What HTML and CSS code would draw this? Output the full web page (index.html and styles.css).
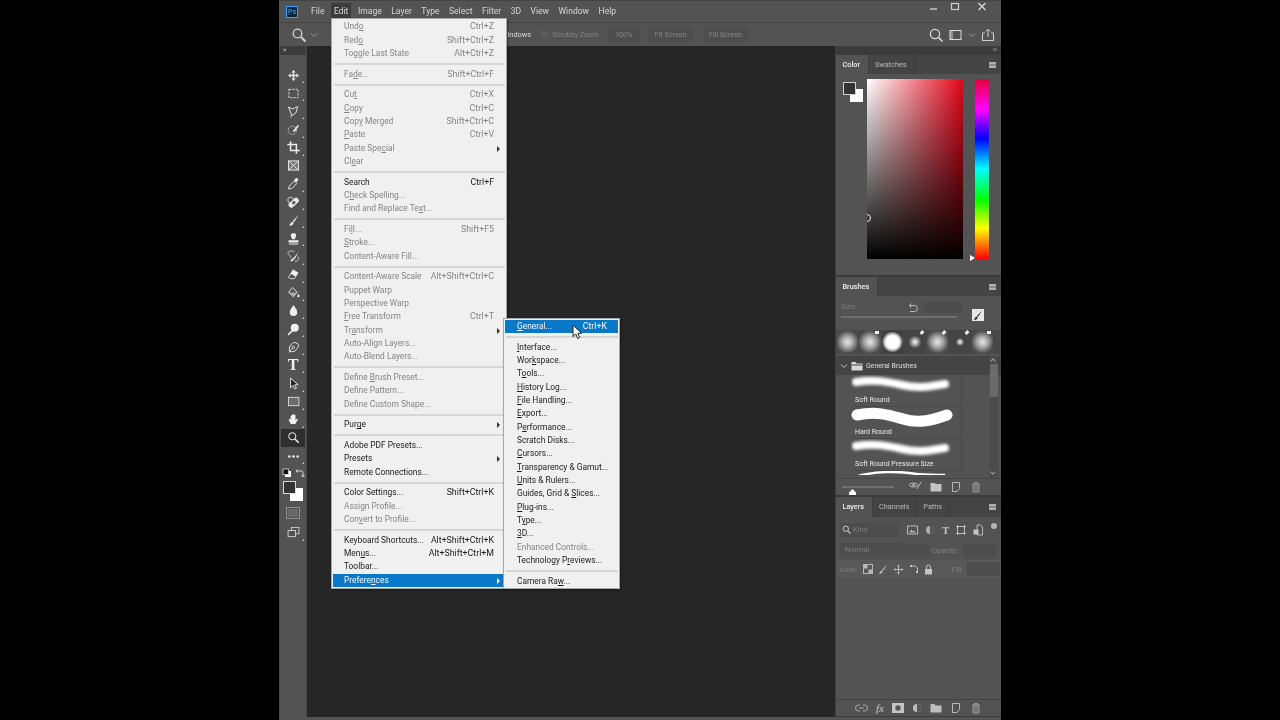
FILE: index.html
```html
<!DOCTYPE html>
<html lang="en">
<head>
    <meta charset="UTF-8">
    <meta name="viewport" content="width=device-width, initial-scale=1.0">
    <title>Photoshop Preferences Menu</title>
    <link rel="stylesheet" href="styles.css">
</head>
<body>
    <div class="app">
        <div class="menubar">
            <div class="ps-logo">Ps</div>
            <nav class="menu-names">
                <span>File</span>
                <span class="open">Edit</span>
                <span>Image</span>
                <span>Layer</span>
                <span>Type</span>
                <span>Select</span>
                <span>Filter</span>
                <span>3D</span>
                <span>View</span>
                <span>Window</span>
                <span>Help</span>
            </nav>
            <div class="win-controls">
                <svg width="10" height="10" viewBox="0 0 10 10"><path d="M1 7h7" stroke="#bdbdbd" stroke-width="1.6"/></svg>
                <svg width="10" height="10" viewBox="0 0 10 10"><rect x="1.5" y="1.5" width="7" height="6" fill="none" stroke="#cfcfcf" stroke-width="1.2"/></svg>
                <svg width="10" height="10" viewBox="0 0 10 10"><path d="M1.5 1l7 7M8.5 1l-7 7" stroke="#d8d8d8" stroke-width="1.3"/></svg>
            </div>
        </div>

        <div class="optionsbar">
            <svg class="opt-zoom" width="16" height="16" viewBox="0 0 16 16"><circle cx="6.5" cy="6.5" r="4.3" fill="none" stroke="#d4d4d4" stroke-width="1.3"/><path d="M10 10l4.5 4.5" stroke="#d4d4d4" stroke-width="2"/></svg>
            <svg class="opt-chev" width="8" height="8" viewBox="0 0 8 8"><path d="M1 2.5l3 3 3-3" fill="none" stroke="#9a9a9a"/></svg>
            <span class="opt-windows">Windows</span>
            <span class="opt-check"></span>
            <span class="opt-dim">Scrubby Zoom</span>
            <span class="opt-btn pct">100%</span>
            <span class="opt-btn fit">Fit Screen</span>
            <span class="opt-btn fill">Fill Screen</span>
            <div class="opt-right">
                <svg width="16" height="16" viewBox="0 0 16 16"><circle cx="7" cy="7" r="4.6" fill="none" stroke="#dcdcdc" stroke-width="1.2"/><path d="M10.5 10.5l4 4" stroke="#dcdcdc" stroke-width="1.6"/></svg>
                <svg width="14" height="12" viewBox="0 0 14 12"><rect x="1" y="1.5" width="11" height="9" fill="none" stroke="#dcdcdc"/><rect x="1" y="1.5" width="3" height="9" fill="#dcdcdc" opacity=".45"/></svg>
                <svg width="8" height="8" viewBox="0 0 8 8"><path d="M1 2.5l3 3 3-3" fill="none" stroke="#9a9a9a"/></svg>
                <svg width="14" height="14" viewBox="0 0 14 14"><path d="M4 5H1.5v7.500h11V5H10M7 9V1.500M4.800 3.500L7 1.200l2.200 2.300" fill="none" stroke="#cfcfcf"/></svg>
            </div>
        </div>

        <div class="workspace">
            <aside class="tools">
                <div class="collapse-strip">&raquo;</div>
                <div class="tool-list">
                    <div class="tool more"><svg viewBox="0 0 18 18"><path d="M9 2.500l2.600 3H6.400zM9 15.500l2.600-3H6.400zM2.500 9l3-2.600v5.200zM15.500 9l-3-2.600v5.200z" fill="#e6e6e6"/><path d="M9 5v8M5 9h8" stroke="#e6e6e6" stroke-width="1.800"/></svg></div>
                    <div class="tool more"><svg viewBox="0 0 18 18"><rect x="3.500" y="4" width="11" height="10" fill="none" stroke="#e0e0e0" stroke-width="1.200" stroke-dasharray="2.500 1.500"/></svg></div>
                    <div class="tool more"><svg viewBox="0 0 18 18"><path d="M3 3.500l5 2.500 6-3-2 7.500-5 3.500L3 3.500z" fill="none" stroke="#e0e0e0" stroke-width="1.200"/><path d="M7 13.500c-1.500 1-2 2-.5 2.500" fill="none" stroke="#e0e0e0"/></svg></div>
                    <div class="tool more"><svg viewBox="0 0 18 18"><circle cx="7.500" cy="10" r="5" fill="none" stroke="#d8d8d8" stroke-dasharray="2 1.200"/><path d="M8 11l6-7.500 1.500 1.200-5.500 7.300z" fill="#f0f0f0"/></svg></div>
                    <div class="tool more"><svg viewBox="0 0 18 18"><path d="M5.500 1.500v11h11M1.500 5.500h11v11" fill="none" stroke="#ececec" stroke-width="1.800"/></svg></div>
                    <div class="tool"><svg viewBox="0 0 18 18"><rect x="3" y="3.500" width="12" height="11" fill="#777" stroke="#e4e4e4" stroke-width="1.200"/><path d="M3 3.500l12 11M15 3.500l-12 11" stroke="#e4e4e4" stroke-width="1.200"/></svg></div>
                    <div class="tool more"><svg viewBox="0 0 18 18"><path d="M3 15.500l1-3.500 6-6 3 3-6 6z" fill="none" stroke="#e6e6e6" stroke-width="1.200"/><path d="M9.500 5l2.500-2.500c1-1 3.500 1.500 2.500 2.500L12.500 7.500z" fill="#efefef"/></svg></div>
                    <div class="tool more"><svg viewBox="0 0 18 18"><rect x="2" y="6" width="14" height="6.500" rx="2.500" transform="rotate(-42 9 9)" fill="#ececec"/><rect x="7" y="7" width="4" height="4" transform="rotate(-42 9 9)" fill="#555"/><circle cx="5.500" cy="6" r="3.400" fill="none" stroke="#e0e0e0"/></svg></div>
                    <div class="tool more"><svg viewBox="0 0 18 18"><path d="M15 2.500L8 10l1.500 1.500zM7.500 10.500c-2 .5-1.500 2.500-4 4.500 3 .5 5.500-1 5.500-3z" fill="#efefef"/></svg></div>
                    <div class="tool more"><svg viewBox="0 0 18 18"><path d="M7.200 9.500c0-2-1.500-3-1.500-5C5.700 1.500 12.300 1.500 12.300 4.500c0 2-1.500 3-1.500 5zM3 10.500h12v2.800H3zM3.500 14.500h11v1.200h-11z" fill="#f0f0f0" transform="translate(0 .5)"/></svg></div>
                    <div class="tool more"><svg viewBox="0 0 18 18"><path d="M15 4l-6.500 7 1.500 1.500zM8 11.500c-1.500.5-1.500 2-3 3 2 .5 4-.5 4.500-2z" fill="#efefef"/><path d="M10 3c-4-1.500-8-.5-7.500 2.500.4 2.500 3.500 2 3.500 5M14.500 9c1.500 3-.5 6-3.500 6" fill="none" stroke="#dcdcdc"/></svg></div>
                    <div class="tool more"><svg viewBox="0 0 18 18"><path d="M8.500 3.500l6 3.500-4.500 7H5.500L3 12.500z" fill="none" stroke="#e4e4e4" stroke-width="1.100"/><path d="M8.500 3.500l6 3.500-3 4.500-6-3.500z" fill="#efefef"/></svg></div>
                    <div class="tool more"><svg viewBox="0 0 18 18"><path d="M8 3l5.500 6-5 5-5.500-5.500z" fill="none" stroke="#e4e4e4" stroke-width="1.200"/><path d="M3 9h10l-4.500 5z" fill="#aaa"/><path d="M15 10.500c.8 1.500 1.300 2.200 1.300 3a1.300 1.300 0 0 1-2.600 0c0-.8.500-1.500 1.300-3z" fill="#efefef"/></svg></div>
                    <div class="tool more"><svg viewBox="0 0 18 18"><path d="M9 2.500c2 3.500 4.500 5.500 4.500 8.500a4.500 4.500 0 0 1-9 0c0-3 2.500-5 4.500-8.500z" fill="#ececec"/></svg></div>
                    <div class="tool more"><svg viewBox="0 0 18 18"><circle cx="10.500" cy="7" r="4.800" fill="#f0f0f0"/><path d="M7.500 10.500L2.500 15.500" stroke="#f0f0f0" stroke-width="2"/></svg></div>
                    <div class="tool more"><svg viewBox="0 0 18 18"><path d="M9.500 3c3 0 5.500 2 5.500 2.500 0 3-2 6-4 7.500-1.500 1-5.500 1.500-6.500.5s-.5-5 .5-6.500C6 5 9.500 3 9.500 3z" fill="none" stroke="#e4e4e4" stroke-width="1.200"/><circle cx="8.700" cy="9" r="1.500" fill="none" stroke="#e4e4e4"/><path d="M3 15l4.500-5" stroke="#e4e4e4"/></svg></div>
                    <div class="tool more type-tool">T</div>
                    <div class="tool more"><svg viewBox="0 0 18 18"><path d="M5.500 2.500v11.500l3-2.700 2 4.200 2-.9-2-4.100h4z" fill="#222" stroke="#efefef" stroke-width="1.100"/></svg></div>
                    <div class="tool more"><svg viewBox="0 0 18 18"><rect x="3" y="4" width="12.500" height="10" fill="#6c6c6c" stroke="#dcdcdc" stroke-width="1.100"/></svg></div>
                    <div class="tool more"><svg viewBox="0 0 18 18"><path d="M5.500 9V5c0-1 1.400-1 1.400 0V3.700c0-1 1.500-1 1.500 0v-.5c0-1 1.500-1 1.500 0v.8c0-1 1.500-1 1.500 0v6l1.300-1.600c.8-.9 2 .1 1.400 1l-3 5.100H7c-1.500 0-2-1-2.500-2.500L3.300 9.300c-.3-1 1-1.500 1.500-.5z" fill="#f2f2f2"/></svg></div>
                    <div class="tool active"><svg viewBox="0 0 18 18"><circle cx="7.500" cy="7.500" r="4.300" fill="none" stroke="#f0f0f0" stroke-width="1.200"/><path d="M10.800 10.800l4.500 4.500" stroke="#f0f0f0" stroke-width="1.800"/></svg></div>
                    <div class="tool more"><svg viewBox="0 0 18 18"><circle cx="4" cy="9" r="1.600" fill="#e8e8e8"/><circle cx="9" cy="9" r="1.600" fill="#e8e8e8"/><circle cx="14" cy="9" r="1.600" fill="#e8e8e8"/></svg></div>
                </div>
                <div class="swap-row">
                    <svg width="10" height="10" viewBox="0 0 10 10"><rect x="3" y="3" width="6" height="6" fill="#fff"/><rect x="1" y="1" width="5.500" height="5.500" fill="#111" stroke="#ddd" stroke-width=".8"/></svg>
                    <svg width="10" height="10" viewBox="0 0 10 10"><path d="M2.500 1.500l-1.500 1.500 1.500 1.500M1 3h5.500c1 0 1.500.5 1.500 1.500V8M6.500 7.200L8 9l1.500-1.800" fill="none" stroke="#dcdcdc"/></svg>
                </div>
                <div class="tool-colors">
                    <span class="bg-chip"></span>
                    <span class="fg-chip"></span>
                </div>
                <div class="tool-mask"><svg width="14" height="12" viewBox="0 0 14 12"><rect x=".5" y=".5" width="13" height="11" fill="none" stroke="#8f8f8f"/><rect x="3" y="3" width="8" height="6" fill="#666" stroke="#777"/></svg></div>
                <div class="tool more"><svg viewBox="0 0 18 18"><rect x="6.500" y="3" width="9" height="7.500" fill="#535353" stroke="#dcdcdc"/><rect x="2.500" y="6.500" width="9" height="7.500" fill="#535353" stroke="#dcdcdc"/></svg></div>
            </aside>

            <main class="canvas"></main>

            <aside class="panels">
                <div class="collapse-strip right">&#8249;&#8250;</div>

                <section class="panel color-panel">
                    <div class="tabs">
                        <span class="tab active">Color</span>
                        <span class="tab">Swatches</span>
                        <span class="panel-menu"></span>
                    </div>
                    <div class="color-body">
                        <div class="chips">
                            <span class="chip-bg"></span>
                            <span class="chip-fg"></span>
                        </div>
                        <div class="sat-field">
                            <span class="sat-handle"></span>
                        </div>
                        <div class="hue-bar">
                            <span class="hue-handle"></span>
                        </div>
                    </div>
                </section>

                <section class="panel brush-panel">
                    <div class="tabs">
                        <span class="tab active">Brushes</span>
                        <span class="panel-menu"></span>
                    </div>
                    <div class="brush-size">
                        <div class="size-row">
                            <span class="size-label">Size:</span>
                            <svg width="12" height="12" viewBox="0 0 12 12"><path d="M2.500 3.500h5a3 3 0 0 1 0 6H3M4.500 1.500l-2 2 2 2" fill="none" stroke="#bcbcbc"/></svg>
                            <span class="size-input"></span>
                            <span class="brush-toggle"><svg width="12" height="12" viewBox="0 0 12 12"><path d="M10 1.500L5 7l1 1zM4.500 7.500c-1.500.5-1 2-3 3 2.500 1 4.500-.5 4-2z" fill="#222"/></svg></span>
                        </div>
                        <div class="size-slider"></div>
                    </div>
                    <div class="presets">
                        <span class="preset soft"></span>
                        <span class="preset soft flag"></span>
                        <span class="preset hard"></span>
                        <span class="preset tiny pin dark"></span>
                        <span class="preset soft pin"></span>
                        <span class="preset tinier pin dark"></span>
                        <span class="preset soft flag"></span>
                    </div>
                    <div class="brush-list">
                        <div class="brush-group">
                            <svg width="8" height="8" viewBox="0 0 8 8"><path d="M1 2.500l3 3 3-3" fill="none" stroke="#c4c4c4"/></svg>
                            <svg width="12" height="10" viewBox="0 0 12 10"><path d="M.5 1h4l1 1.500h6V9.500H.5z" fill="#d8d8d8"/><path d="M.5 4h11" stroke="#444"/></svg>
                            <span>General Brushes</span>
                        </div>
                        <div class="brush-rows">
                            <div class="brush-item">
                                <svg class="stroke-svg" width="110" height="20" viewBox="0 0 110 20"><path class="stroke soft-stroke" d="M5 7c20-3 32 0 46 3 17 4 30 1 43-1"/></svg>
                                <span>Soft Round</span>
                            </div>
                            <div class="brush-item">
                                <svg class="stroke-svg" width="110" height="20" viewBox="0 0 110 20"><path class="stroke hard-stroke" d="M6 8c20-4 32 0 46 4 16 5 30 1 44-4"/></svg>
                                <span>Hard Round</span>
                            </div>
                            <div class="brush-item">
                                <svg class="stroke-svg" width="110" height="20" viewBox="0 0 110 20"><path class="stroke soft-stroke" d="M5 7c20-3 32 0 46 3 17 4 30 1 43-1"/></svg>
                                <span>Soft Round Pressure Size</span>
                            </div>
                            <div class="brush-item cut">
                                <svg class="stroke-svg" width="110" height="6" viewBox="0 0 110 6"><path d="M4 6C22 0 48 0 66 3c12 1 22 1 28 1" fill="none" stroke="#fff" stroke-width="2.500"/></svg>
                            </div>
                        </div>
                        <div class="scroll-track">
                            <span class="scroll-up"></span>
                            <span class="scroll-thumb"></span>
                            <span class="scroll-down"></span>
                        </div>
                    </div>
                    <div class="panel-footer brush-footer">
                        <div class="foot-slider"><span></span></div>
                        <svg width="14" height="12" viewBox="0 0 14 12"><ellipse cx="5.500" cy="4" rx="4" ry="2" fill="none" stroke="#b8b8b8"/><circle cx="5.500" cy="4" r="1.300" fill="#b8b8b8"/><path d="M13 1L9 8" stroke="#b8b8b8"/></svg>
                        <svg width="12" height="12" viewBox="0 0 12 12"><path d="M.5 2h4l1 1h6v7.500H.5z" fill="#c4c4c4"/></svg>
                        <svg width="12" height="12" viewBox="0 0 12 12"><path d="M2.500 1.500h7v6l-2.500 3H2.500z" fill="none" stroke="#b8b8b8"/></svg>
                        <svg width="12" height="12" viewBox="0 0 12 12"><path d="M2 3h8M4.500 3V1.500h3V3M3 3v8h6V3" fill="#777" stroke="#8f8f8f"/></svg>
                    </div>
                </section>

                <section class="panel layers-panel">
                    <div class="tabs">
                        <span class="tab active">Layers</span>
                        <span class="tab">Channels</span>
                        <span class="tab">Paths</span>
                        <span class="panel-menu"></span>
                    </div>
                    <div class="layer-row filter-row">
                        <div class="field kind">
                            <svg width="9" height="9" viewBox="0 0 9 9"><circle cx="3.800" cy="3.800" r="2.700" fill="none" stroke="#c8c8c8"/><path d="M5.800 5.800L8.500 8.500" stroke="#c8c8c8" stroke-width="1.200"/></svg>
                            <span>Kind</span>
                        </div>
                        <div class="filter-icons">
                            <svg width="11" height="10" viewBox="0 0 11 10"><rect x=".5" y="1" width="10" height="8" fill="none" stroke="#b8b8b8"/><path d="M2 7.500l2.500-3 1.500 2 1-1 2 2z" fill="#b8b8b8"/></svg>
                            <svg width="10" height="10" viewBox="0 0 10 10"><circle cx="5" cy="5" r="4" fill="#aaa"/><path d="M5 1a4 4 0 0 1 0 8z" fill="#555"/></svg>
                            <span class="filter-t">T</span>
                            <svg width="10" height="10" viewBox="0 0 10 10"><rect x="1.500" y="1.500" width="7" height="7" fill="none" stroke="#b8b8b8"/><path d="M1 1h1v1H1zM8 1h1v1H8zM1 8h1v1H1zM8 8h1v1H8z" fill="#ddd" stroke="#ddd"/></svg>
                            <svg width="10" height="12" viewBox="0 0 10 12"><path d="M4 1h3.500l2 2v8H4z" fill="none" stroke="#b8b8b8"/><rect x=".5" y="5.500" width="5" height="5" fill="#c4c4c4"/></svg>
                            <span class="filter-dot"></span>
                        </div>
                    </div>
                    <div class="layer-row blend-row">
                        <div class="field normal">Normal</div>
                        <span class="dim-label">Opacity:</span>
                        <div class="field stepper"></div>
                    </div>
                    <div class="layer-row lock-row">
                        <span class="dim-label">Lock:</span>
                        <div class="lock-icons">
                            <svg width="10" height="10" viewBox="0 0 10 10"><path d="M1 1h3.500v3.500H1zM5.500 5.500H9V9H5.500z" fill="#b8b8b8"/><rect x=".5" y=".5" width="9" height="9" fill="none" stroke="#b8b8b8"/></svg>
                            <svg width="10" height="10" viewBox="0 0 10 10"><path d="M9 .5L4 6l1 1zM3.500 6.500c-1 .5-1 2-3 3 2.500.5 4-.5 4-2z" fill="#c4c4c4"/></svg>
                            <svg width="11" height="11" viewBox="0 0 11 11"><path d="M5.500 1v9M1 5.500h9" stroke="#b8b8b8"/><path d="M5.500.5l1.500 2H4zM5.500 10.500l1.500-2H4zM.5 5.500l2-1.500v3zM10.500 5.500l-2-1.500v3z" fill="#b8b8b8"/></svg>
                            <svg width="10" height="10" viewBox="0 0 10 10"><path d="M1.500 2h5l2 2v5" fill="none" stroke="#b8b8b8"/><path d="M1 1h2v2H1zM7 7h2v2H7z" fill="#c4c4c4"/></svg>
                            <svg width="9" height="11" viewBox="0 0 9 11"><path d="M2.500 5V3a2 2 0 0 1 4 0v2" fill="none" stroke="#c4c4c4"/><rect x="1" y="5" width="7" height="5.500" fill="#c4c4c4"/></svg>
                        </div>
                        <span class="dim-label fill-label">Fill:</span>
                        <div class="field stepper"></div>
                    </div>
                    <div class="layer-empty"></div>
                    <div class="panel-footer layer-footer">
                        <svg width="13" height="8" viewBox="0 0 13 8"><path d="M5 1H3.500a3 3 0 0 0 0 6H5M8 1h1.500a3 3 0 0 1 0 6H8M4 4h5" fill="none" stroke="#a8a8a8"/></svg>
                        <span class="fx">fx</span>
                        <svg width="12" height="10" viewBox="0 0 12 10"><rect width="12" height="10" fill="#c4c4c4"/><circle cx="6" cy="5" r="2.700" fill="#555"/></svg>
                        <svg width="10" height="10" viewBox="0 0 10 10"><circle cx="5" cy="5" r="4" fill="#bbb"/><path d="M5 1a4 4 0 0 1 0 8z" fill="#555"/></svg>
                        <svg width="12" height="10" viewBox="0 0 12 10"><path d="M.5 1h4l1 1.500h6V9.500H.5z" fill="#bdbdbd"/></svg>
                        <svg width="12" height="12" viewBox="0 0 12 12"><path d="M2.500 1.500h7v6l-2.500 3H2.500z" fill="none" stroke="#b8b8b8"/></svg>
                        <svg width="12" height="12" viewBox="0 0 12 12"><path d="M2 3h8M4.500 3V1.500h3V3M3 3v8h6V3" fill="#777" stroke="#9a9a9a"/></svg>
                    </div>
                </section>
            </aside>
        </div>

        <!-- Edit dropdown -->
        <div class="menu edit-menu">
            <div class="item off"><span>Und<u>o</u></span><kbd>Ctrl+Z</kbd></div>
            <div class="item off"><span>Red<u>o</u></span><kbd>Shift+Ctrl+Z</kbd></div>
            <div class="item off"><span>Toggle Last State</span><kbd>Alt+Ctrl+Z</kbd></div>
            <hr>
            <div class="item off"><span>Fa<u>d</u>e...</span><kbd>Shift+Ctrl+F</kbd></div>
            <hr>
            <div class="item off"><span>Cu<u>t</u></span><kbd>Ctrl+X</kbd></div>
            <div class="item off"><span><u>C</u>opy</span><kbd>Ctrl+C</kbd></div>
            <div class="item off"><span>Cop<u>y</u> Merged</span><kbd>Shift+Ctrl+C</kbd></div>
            <div class="item off"><span><u>P</u>aste</span><kbd>Ctrl+V</kbd></div>
            <div class="item off sub"><span>Paste Spe<u>c</u>ial</span></div>
            <div class="item off"><span>Cl<u>e</u>ar</span></div>
            <hr>
            <div class="item"><span>Search</span><kbd>Ctrl+F</kbd></div>
            <div class="item off"><span>C<u>h</u>eck Spelling...</span></div>
            <div class="item off"><span>Find and Replace Te<u>x</u>t...</span></div>
            <hr>
            <div class="item off"><span>Fi<u>l</u>l...</span><kbd>Shift+F5</kbd></div>
            <div class="item off"><span><u>S</u>troke...</span></div>
            <div class="item off"><span>Content-Aware Fill...</span></div>
            <hr>
            <div class="item off"><span>Content-Aware Scale</span><kbd>Alt+Shift+Ctrl+C</kbd></div>
            <div class="item off"><span>Puppet Warp</span></div>
            <div class="item off"><span>Perspective Warp</span></div>
            <div class="item off"><span><u>F</u>ree Transform</span><kbd>Ctrl+T</kbd></div>
            <div class="item off sub"><span>Tr<u>a</u>nsform</span></div>
            <div class="item off"><span>Auto-Align Layers...</span></div>
            <div class="item off"><span>Auto-Blend Layers...</span></div>
            <hr>
            <div class="item off"><span>Define <u>B</u>rush Preset...</span></div>
            <div class="item off"><span>Define Pattern...</span></div>
            <div class="item off"><span>Define Custom Shape...</span></div>
            <hr>
            <div class="item sub"><span>Pur<u>g</u>e</span></div>
            <hr>
            <div class="item"><span>Adobe PDF Presets...</span></div>
            <div class="item sub"><span>Presets</span></div>
            <div class="item"><span>Remote Connections...</span></div>
            <hr>
            <div class="item"><span>Color Settings...</span><kbd>Shift+Ctrl+K</kbd></div>
            <div class="item off"><span>Assign Profile...</span></div>
            <div class="item off"><span>Con<u>v</u>ert to Profile...</span></div>
            <hr>
            <div class="item"><span>Keyboard Shortcuts...</span><kbd>Alt+Shift+Ctrl+K</kbd></div>
            <div class="item"><span>Men<u>u</u>s...</span><kbd>Alt+Shift+Ctrl+M</kbd></div>
            <div class="item"><span>Toolbar...</span></div>
            <div class="item sub selected"><span>Prefere<u>n</u>ces</span></div>
        </div>

        <!-- Preferences flyout -->
        <div class="menu prefs-menu">
            <div class="item selected"><span><u>G</u>eneral...</span><kbd>Ctrl+K</kbd></div>
            <hr>
            <div class="item"><span><u>I</u>nterface...</span></div>
            <div class="item"><span>Wor<u>k</u>space...</span></div>
            <div class="item"><span>T<u>o</u>ols...</span></div>
            <div class="item"><span><u>H</u>istory Log...</span></div>
            <div class="item"><span><u>F</u>ile Handling...</span></div>
            <div class="item"><span><u>E</u>xport...</span></div>
            <div class="item"><span>P<u>e</u>rformance...</span></div>
            <div class="item"><span>Scratch Disks...</span></div>
            <div class="item"><span><u>C</u>ursors...</span></div>
            <div class="item"><span><u>T</u>ransparency &amp; Gamut...</span></div>
            <div class="item"><span><u>U</u>nits &amp; Rulers...</span></div>
            <div class="item"><span>Guides, Grid &amp; <u>S</u>lices...</span></div>
            <div class="item"><span><u>P</u>lug-ins...</span></div>
            <div class="item"><span>T<u>y</u>pe...</span></div>
            <div class="item"><span><u>3</u>D...</span></div>
            <div class="item off"><span>Enhanced Controls...</span></div>
            <div class="item"><span>Technology P<u>r</u>eviews...</span></div>
            <hr>
            <div class="item"><span>Camera Ra<u>w</u>...</span></div>
        </div>

        <svg class="mouse" width="11" height="16" viewBox="0 0 11 16"><path d="M1 1v11.500l2.800-2.500 1.900 4.500 2-.9-1.900-4.300h3.700z" fill="#fff" stroke="#111" stroke-width=".9"/></svg>
    </div>
</body>
</html>
```

FILE: styles.css
```css
* {
    box-sizing: border-box;
}

body {
    margin: 0;
    height: 720px;
    overflow: hidden;
    display: flex;
    justify-content: center;
    background-color: #000;
    font-family: Roboto, "Open Sans", sans-serif;
    font-size: 8px;
}

.app {
    position: relative;
    width: 722px;
    height: 720px;
    display: flex;
    flex-direction: column;
    background-color: #535353;
    color: #d6d6d6;
    overflow: hidden;
    filter: blur(0.3px);
}

/* top bars */
.menubar {
    height: 22px;
    display: flex;
    align-items: center;
    padding-left: 7px;
    border-top: 1px solid #444;
    background-color: #535353;
}

.ps-logo {
    width: 12px;
    height: 12px;
    border: 1px solid #31a8ff;
    background-color: #06263f;
    color: #4db3ff;
    font-size: 7px;
    line-height: 10px;
    text-align: center;
}

.menu-names {
    display: flex;
    margin-left: 10px;
    font-size: 8.55px;
}

.menu-names span {
    padding: 0 3px;
    height: 17px;
    line-height: 17px;
    margin-right: 3.5px;
}

.menu-names .open {
    background-color: #3c3c3c;
}

.win-controls {
    margin-left: auto;
    margin-right: 14px;
    margin-top: -9px;
    display: flex;
    gap: 11px;
}

.win-controls svg:last-child {
    margin-left: 6px;
}

.optionsbar {
    height: 24px;
    display: flex;
    align-items: center;
    border-top: 1px solid #424242;
    padding-left: 12px;
    font-size: 7.2px;
    white-space: nowrap;
    color: #dadada;
}

.opt-chev {
    margin-left: 3px;
}

.opt-windows {
    margin-left: 183px;
    font-size: 7.4px;
}

.opt-check {
    width: 7px;
    height: 7px;
    margin-left: 10px;
    background-color: #5c5c5c;
}

.opt-dim {
    margin-left: 4px;
    color: #858585;
}

.opt-btn {
    height: 15px;
    line-height: 15px;
    text-align: center;
    color: #858585;
    background-color: #4e4e4e;
}

.pct {
    width: 34px;
    margin-left: 8px;
}

.fit {
    width: 46px;
    margin-left: 7px;
}

.fill {
    width: 46px;
    margin-left: 9px;
}

.opt-right {
    margin-left: auto;
    margin-right: 6px;
    display: flex;
    align-items: center;
    gap: 5px;
}

.workspace {
    flex: 1;
    display: flex;
    min-height: 0;
    margin-bottom: 3px;
}

/* tools column */
.tools {
    width: 28px;
    padding: 0 1px;
    background-color: #484848;
    display: flex;
    flex-direction: column;
    align-items: stretch;
}

.collapse-strip {
    height: 9px;
    line-height: 8px;
    padding-left: 3px;
    font-size: 7px;
    color: #c8c8c8;
    background-color: #3c3c3c;
}

.collapse-strip.right {
    padding: 0 4px 0 0;
    text-align: right;
}

.tool-list {
    padding-top: 11px;
    background-color: #535353;
}

.tool {
    position: relative;
    height: 18.15px;
    display: flex;
    align-items: center;
    justify-content: center;
    background-color: #535353;
}

.tool svg {
    width: 15px;
    height: 15px;
}

.tool.more::after {
    content: "";
    position: absolute;
    right: 2px;
    bottom: 1px;
    border-left: 2px solid transparent;
    border-bottom: 2px solid #c8c8c8;
}

.tool.active {
    margin: 0 1px;
    background-color: #2f2f2f;
}

.type-tool {
    font-family: "Liberation Serif", serif;
    font-size: 16px;
    font-weight: bold;
    color: #f0f0f0;
}

.swap-row {
    height: 14.5px;
    padding-top: 2.5px;
    display: flex;
    justify-content: center;
    gap: 3px;
    background-color: #535353;
}

.tool-colors {
    position: relative;
    height: 22px;
    background-color: #535353;
}

.fg-chip,
.bg-chip {
    position: absolute;
    width: 13px;
    height: 13px;
}

.fg-chip {
    left: 3px;
    top: 1px;
    background-color: #333;
    border: 1px solid #d8d8d8;
}

.bg-chip {
    left: 10px;
    top: 8px;
    background-color: #fff;
}

.tool-mask {
    height: 22px;
    display: flex;
    align-items: center;
    justify-content: center;
    background-color: #535353;
}

.tools > .tool {
    flex: none;
}

.tools::after {
    content: "";
    flex: 1;
    background-color: #535353;
}

.canvas {
    flex: 1;
    background-color: #262626;
}

/* right panels */
.panels {
    width: 166px;
    display: flex;
    flex-direction: column;
    gap: 2px;
    border-left: 1px solid #3e3e3e;
    background-color: #3a3a3a;
}

.panels .collapse-strip {
    margin-bottom: -2px;
}

.panel {
    display: flex;
    flex-direction: column;
    background-color: #535353;
}

.tabs {
    height: 19px;
    flex: none;
    display: flex;
    background-color: #444;
    font-size: 7.3px;
    color: #b8b8b8;
}

.tab {
    padding: 0 7px 0 6px;
    line-height: 19px;
    border-right: 1px solid #3d3d3d;
}

.tab.active {
    padding: 0 8px 0 6.5px;
    background-color: #535353;
    color: #f0f0f0;
    font-weight: 500;
}

.panel-menu {
    width: 7px;
    height: 6px;
    margin: 7px 5px 0 auto;
    border-top: 2px solid #b0b0b0;
    border-bottom: 2px solid #b0b0b0;
    background-color: #8a8a8a;
}

.color-panel {
    height: 220px;
}

.color-body {
    position: relative;
    flex: 1;
    display: flex;
    padding: 5px 0 0 31px;
}

.chips {
    position: absolute;
    left: 7px;
    top: 8px;
}

.chip-fg,
.chip-bg {
    position: absolute;
    width: 13px;
    height: 13px;
}

.chip-fg {
    background-color: #333;
    border: 1px solid #d0d0d0;
}

.chip-bg {
    left: 7px;
    top: 7px;
    background-color: #fff;
}

.sat-field {
    position: relative;
    overflow: hidden;
    width: 96px;
    height: 180px;
    background:
        linear-gradient(to top, #000, rgba(0, 0, 0, 0)),
        linear-gradient(to right, #fff, #e4061a);
}

.sat-handle {
    position: absolute;
    left: -4px;
    top: 135px;
    width: 8px;
    height: 8px;
    border: 1px solid #eee;
    border-radius: 50%;
}

.hue-bar {
    position: relative;
    width: 14px;
    height: 180px;
    margin-left: 12px;
    background: linear-gradient(to bottom, #e6003a, #f0f 17%, #00f 33%, #0ff 50%, #0f0 67%, #ff0 83%, #f00);
}

.hue-handle {
    position: absolute;
    left: -5px;
    bottom: -2px;
    border-left: 5px solid #fff;
    border-top: 3px solid transparent;
    border-bottom: 3px solid transparent;
}

.brush-panel {
    height: 218px;
}

.brush-size {
    height: 34px;
    padding: 6px 0 0 5px;
    flex: none;
}

.size-row {
    height: 15px;
    display: flex;
    align-items: flex-start;
    color: #7c7c7c;
    font-size: 7.3px;
}

.size-label {
    width: 66px;
}

.size-input {
    width: 38px;
    height: 11px;
    margin-left: 5px;
    background-color: #4c4c4c;
}

.brush-toggle {
    width: 12px;
    height: 12px;
    margin: 7px 0 0 10px;
    background-color: #e8e8e8;
    line-height: 0;
}

.size-slider {
    width: 116px;
    height: 2px;
    margin-top: -1px;
    background-color: #6e6e6e;
}

.presets {
    height: 24px;
    flex: none;
    display: flex;
    gap: 1px;
    padding: 0 8px 0 1px;
    background-color: #474747;
}

.preset {
    position: relative;
    flex: 1;
    background-color: #3f3f3f;
}

.preset.soft {
    background-image: radial-gradient(circle at center, #e8e8e8 0, #b0b0b0 30%, #4a4a4a 72%);
}

.preset.hard {
    background-image: radial-gradient(circle at center, #fff 0, #fff 40%, #bbb 52%, #404040 66%);
}

.preset.tiny {
    background-image: radial-gradient(circle at center, #fff 0, #aaa 18%, #444 40%);
}

.preset.tinier {
    background-image: radial-gradient(circle at center, #fff 0, #bbb 10%, #444 25%);
}

.preset.flag::after,
.preset.pin::after {
    content: "";
    position: absolute;
    right: 2px;
    top: 1px;
    width: 4px;
    height: 3px;
    background-color: #efefef;
}

.preset.pin::after {
    transform: rotate(-45deg);
}

.brush-list {
    position: relative;
    flex: 1;
    min-height: 0;
    overflow: hidden;
    margin-top: 2px;
}

.brush-group {
    height: 19px;
    display: flex;
    align-items: center;
    gap: 3px;
    padding-left: 4px;
    background-color: #444;
    font-size: 7px;
    color: #dedede;
}

.brush-group span {
    margin-left: 0;
}

.brush-rows {
    padding-left: 15px;
}

.brush-item {
    width: 111px;
    height: 32px;
    margin-bottom: 0;
    border-bottom: 1px solid #484848;
    border-right: 1px solid #484848;
    display: flex;
    flex-direction: column;
    font-size: 7px;
    color: #e8e8e8;
    white-space: nowrap;
}

.brush-item span {
    padding-left: 4px;
    line-height: 11px;
}

.brush-item.cut {
    height: 4px;
    border: 0;
    overflow: hidden;
}

.stroke-svg {
    flex: none;
}

.stroke {
    fill: none;
    stroke: #fff;
    stroke-linecap: round;
}

.soft-stroke {
    stroke-width: 8px;
    filter: blur(1.8px);
}

.hard-stroke {
    stroke-width: 11px;
}

.scroll-track {
    position: absolute;
    right: 3px;
    top: 0;
    bottom: 0;
    width: 8px;
    background-color: #4b4b4b;
}

.scroll-thumb {
    position: absolute;
    top: 8px;
    left: 0;
    width: 8px;
    height: 33px;
    background-color: #6a6a6a;
}

.scroll-up,
.scroll-down {
    position: absolute;
    left: 1px;
    width: 4px;
    height: 4px;
    border-right: 1px solid #9a9a9a;
    border-bottom: 1px solid #9a9a9a;
    transform: rotate(45deg);
}

.scroll-up {
    top: 3px;
    transform: rotate(225deg);
}

.scroll-down {
    bottom: 4px;
}

.panel-footer {
    height: 17px;
    flex: none;
    display: flex;
    align-items: center;
    border-top: 1px solid #454545;
}

.brush-footer {
    gap: 8px;
    padding-left: 6px;
}

.foot-slider {
    position: relative;
    width: 52px;
    height: 2px;
    margin-right: 6px;
    background-color: #707070;
}

.foot-slider span {
    position: absolute;
    left: 7px;
    top: 3px;
    width: 7px;
    height: 6px;
    background-color: #fff;
    clip-path: polygon(50% 0, 100% 60%, 100% 100%, 0 100%, 0 60%);
}

.layers-panel {
    flex: 1;
    min-height: 0;
    margin-bottom: 1px;
}

.layers-panel .tabs {
    height: 20px;
}

.layers-panel .tab {
    line-height: 20px;
}

.layer-row {
    display: flex;
    align-items: center;
    flex: none;
    color: #7e7e7e;
    font-size: 7.4px;
}

.filter-row {
    height: 15px;
    margin-top: 5px;
    padding-left: 4px;
}

.field {
    height: 14px;
    line-height: 14px;
    background-color: #4d4d4d;
}

.kind {
    width: 58px;
    display: flex;
    align-items: center;
    gap: 2px;
    padding-left: 2px;
}

.kind svg {
    flex: none;
}

.filter-icons {
    display: flex;
    align-items: center;
    gap: 7px;
    margin-left: 9px;
    position: relative;
}

.filter-t {
    font-family: "Liberation Serif", serif;
    font-size: 11px;
    font-weight: bold;
    color: #c0c0c0;
}

.filter-dot {
    width: 6px;
    height: 6px;
    margin: -8px 0 0 1px;
    border-radius: 50%;
    background-color: #b4b4b4;
}

.blend-row {
    height: 14px;
    margin-top: 6px;
    padding-left: 4px;
}

.normal {
    width: 89px;
    padding-left: 5px;
    margin-right: 3px;
}

.stepper {
    width: 33px;
    margin-left: 4px;
}

.lock-row {
    height: 18px;
    margin-top: 3px;
    padding-left: 4px;
    background-color: #585858;
}

.lock-icons {
    display: flex;
    align-items: center;
    gap: 5px;
    margin-left: 5px;
}

.fill-label {
    margin-left: 19px;
}

.layer-empty {
    flex: 1;
}

.layer-footer {
    justify-content: center;
    gap: 8px;
    color: #b0b0b0;
}

.fx {
    font-family: "Liberation Serif", serif;
    font-style: italic;
    font-size: 11px;
    color: #c8c8c8;
}

/* dropdowns */
.menu {
    position: absolute;
    padding: 1.2px 1px 2px;
    background-color: #f0f0f0;
    border: 1px solid #a8a8a8;
    box-shadow: 1px 1px 2px rgba(0, 0, 0, 0.4);
    color: #1c1c1c;
    white-space: nowrap;
    font-size: 8.4px;
}

.edit-menu {
    left: 52px;
    top: 18px;
    width: 176px;
    height: 571px;
}

.prefs-menu {
    left: 224px;
    top: 318px;
    width: 117px;
    height: 271px;
    padding-top: 1px;
}

.item {
    position: relative;
    height: 13.33px;
    line-height: 13.33px;
    display: flex;
    justify-content: space-between;
    padding: 0 11px 0 11px;
}

.prefs-menu .item {
    padding: 0 11px 0 12px;
}

.item kbd {
    font: inherit;
    font-size: 8.8px;
}

.item u {
    text-underline-offset: 1px;
}

.item.off {
    color: #858585;
}

.item.sub::after {
    content: "";
    position: absolute;
    right: 5px;
    top: 4px;
    border-left: 3px solid #333;
    border-top: 3px solid transparent;
    border-bottom: 3px solid transparent;
}

.item.selected {
    background-color: #0a78c8;
    color: #f4f8ff;
}

.item.selected.sub::after {
    border-left-color: #fff;
}

.menu hr {
    height: 2px;
    margin: 2.7px 0 2.7px 1px;
    border: 0;
    background-color: #d6d6d6;
}

.mouse {
    position: absolute;
    left: 293px;
    top: 324px;
}
```
